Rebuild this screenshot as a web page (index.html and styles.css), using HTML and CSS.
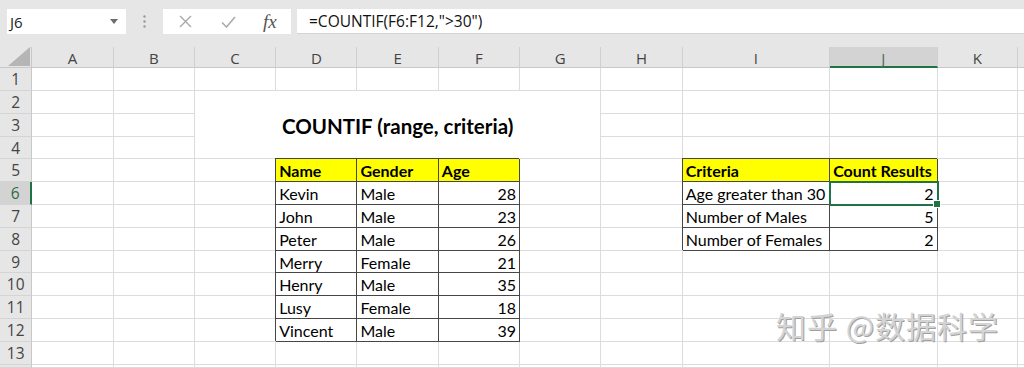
FILE: index.html
```html
<!DOCTYPE html>
<html lang="en">
<head>
    <meta charset="utf-8">
    <title>COUNTIF</title>
    <link rel="stylesheet" href="styles.css">
</head>
<body>
    <div class="toolbar">
        <div class="namebox">
            <span>J6</span>
            <svg class="arrow" width="8" height="5" viewBox="0 0 8 5"><path d="M0 0h8L4 5z" fill="#6d6d6d"/></svg>
        </div>
        <div class="dots">
            <svg width="3" height="13" viewBox="0 0 3 13"><circle cx="1.5" cy="1.5" r="1.2" fill="#9a9a9a"/><circle cx="1.5" cy="6.5" r="1.2" fill="#9a9a9a"/><circle cx="1.5" cy="11.5" r="1.2" fill="#9a9a9a"/></svg>
        </div>
        <div class="fxbox">
            <svg width="13" height="13" viewBox="0 0 13 13"><path d="M1 1l11 11M12 1L1 12" stroke="#a8a8a8" stroke-width="1.4" fill="none"/></svg>
            <svg width="15" height="12" viewBox="0 0 15 12"><path d="M1 6.5l4.5 4.5L14 1" stroke="#a8a8a8" stroke-width="1.5" fill="none"/></svg>
            <span class="fx">fx</span>
        </div>
        <div class="formula">=COUNTIF(F6:F12,"&gt;30")</div>
    </div>

    <div class="sheet">
        <div class="corner"><svg width="22" height="19" viewBox="0 0 22 19"><path d="M22 0v19H0z" fill="#b5b5b5"/></svg></div>
        <div class="ch">A</div><div class="ch">B</div><div class="ch">C</div><div class="ch">D</div><div class="ch">E</div><div class="ch">F</div><div class="ch">G</div><div class="ch">H</div><div class="ch">I</div><div class="ch active">J</div><div class="ch">K</div><div class="ch"></div>

        <div class="rh">1</div><div></div><div></div><div></div><div></div><div></div><div></div><div></div><div></div><div></div><div></div><div></div><div></div>

        <div class="rh">2</div><div></div><div></div>
        <div class="title">COUNTIF (range, criteria)</div>
        <div></div><div></div><div></div><div></div><div></div>

        <div class="rh">3</div><div></div><div></div><div></div><div></div><div></div><div></div><div></div>
        <div class="rh">4</div><div></div><div></div><div></div><div></div><div></div><div></div><div></div>

        <div class="rh">5</div><div></div><div></div><div></div>
        <div class="b head">Name</div><div class="b head">Gender</div><div class="b head">Age</div>
        <div></div><div></div>
        <div class="b head">Criteria</div><div class="b head">Count Results</div>
        <div></div><div></div>

        <div class="rh active">6</div><div></div><div></div><div></div>
        <div class="b">Kevin</div><div class="b">Male</div><div class="b num">28</div>
        <div></div><div></div>
        <div class="b">Age greater than 30</div><div class="b num sel">2</div>
        <div></div><div></div>

        <div class="rh">7</div><div></div><div></div><div></div>
        <div class="b">John</div><div class="b">Male</div><div class="b num">23</div>
        <div></div><div></div>
        <div class="b">Number of Males</div><div class="b num">5</div>
        <div></div><div></div>

        <div class="rh">8</div><div></div><div></div><div></div>
        <div class="b">Peter</div><div class="b">Male</div><div class="b num">26</div>
        <div></div><div></div>
        <div class="b">Number of Females</div><div class="b num">2</div>
        <div></div><div></div>

        <div class="rh">9</div><div></div><div></div><div></div>
        <div class="b">Merry</div><div class="b">Female</div><div class="b num">21</div>
        <div></div><div></div><div></div><div></div><div></div><div></div>

        <div class="rh">10</div><div></div><div></div><div></div>
        <div class="b">Henry</div><div class="b">Male</div><div class="b num">35</div>
        <div></div><div></div><div></div><div></div><div></div><div></div>

        <div class="rh">11</div><div></div><div></div><div></div>
        <div class="b">Lusy</div><div class="b">Female</div><div class="b num">18</div>
        <div></div><div></div><div></div><div></div><div></div><div></div>

        <div class="rh">12</div><div></div><div></div><div></div>
        <div class="b">Vincent</div><div class="b">Male</div><div class="b num">39</div>
        <div></div><div></div><div></div><div></div><div></div><div></div>

        <div class="rh">13</div><div></div><div></div><div></div><div></div><div></div><div></div><div></div><div></div><div></div><div></div><div></div><div></div>
        <div class="rh"></div><div></div><div></div><div></div><div></div><div></div><div></div><div></div><div></div><div></div><div></div><div></div><div></div>
    </div>

    <div class="watermark">知乎 @数据科学</div>
</body>
</html>
```

FILE: styles.css
```css
* {
    box-sizing: border-box;
    margin: 0;
    padding: 0;
}
body {
    width: 1024px;
    height: 368px;
    overflow: hidden;
    background-color: #ffffff;
    font-family: "Open Sans", "Noto Sans", sans-serif;
    position: relative;
}

/* formula bar */
.toolbar {
    height: 47px;
    background-color: #e6e6e6;
    display: flex;
    align-items: flex-start;
    padding-top: 9px;
}
.namebox {
    width: 119px;
    height: 25px;
    margin-left: 7px;
    background-color: #fff;
    display: flex;
    align-items: center;
    justify-content: space-between;
    padding: 0 8px 0 3px;
    font-size: 15px;
    color: #222;
}
.dots {
    width: 37px;
    height: 25px;
    display: flex;
    align-items: center;
    justify-content: center;
}
.fxbox {
    width: 128px;
    height: 25px;
    background-color: #fff;
    display: flex;
    align-items: center;
    padding-left: 16px;
    gap: 29px;
}
.fx {
    font-family: "Liberation Serif", serif;
    font-style: italic;
    font-size: 19px;
    color: #555;
    margin-left: -2px;
    line-height: 25px;
}
.formula {
    flex: 1;
    height: 25px;
    margin-left: 6px;
    background-color: #fff;
    border-bottom: 1px solid #d4d4d4;
    padding-left: 12px;
    font-size: 15.5px;
    line-height: 24px;
    color: #111;
}

/* worksheet */
.sheet {
    display: grid;
    height: 321px;
    overflow: hidden;
    grid-template-columns: 32.3px repeat(8, 81.3px) 147.5px 107.4px 80.6px 1fr;
    grid-template-rows: 21.2px repeat(13, 22.8px) 1fr;
    font-family: Lato, "Open Sans", sans-serif;
    font-size: 16px;
    color: #000;
}
.sheet > div {
    border-right: 1px solid #dcdcdc;
    border-bottom: 1px solid #dcdcdc;
    padding: 1px 3px 0;
    line-height: 21px;
    white-space: nowrap;
}
.sheet > .corner {
    background-color: #e6e6e6;
    border-right-color: #c8c8c8;
    border-bottom-color: #c8c8c8;
    display: flex;
    align-items: flex-end;
    justify-content: flex-end;
    padding: 0 1px 1px 0;
}
.sheet > .ch {
    background-color: #e6e6e6;
    border-right-color: #cfcfcf;
    border-bottom-color: #c8c8c8;
    font-family: "Open Sans", sans-serif;
    font-size: 15px;
    color: #444;
    text-align: center;
    line-height: 20px;
}
.sheet > .rh {
    background-color: #e6e6e6;
    border-right-color: #c8c8c8;
    border-bottom-color: #d4d4d4;
    font-family: "Open Sans", sans-serif;
    font-size: 15.5px;
    color: #444;
    text-align: center;
    padding: 0;
    line-height: 22px;
}
.sheet > .ch.active {
    background-color: #d3d3d3;
    color: #4f6b58;
    border-bottom: 2px solid #217346;
}
.sheet > .rh.active {
    background-color: #d3d3d3;
    color: #2e6b47;
    border-right: 2px solid #217346;
}
.sheet > .title {
    grid-column: span 5;
    grid-row: span 3;
    display: flex;
    align-items: center;
    justify-content: center;
    font-size: 20.5px;
    font-weight: bold;
    padding-top: 3px;
}
.sheet > .b {
    border-right-color: #464646;
    border-bottom-color: #464646;
    box-shadow: -1px -1px 0 #464646;
}
.sheet > .head {
    background-color: #ffff00;
    font-weight: bold;
}
.sheet > .num {
    text-align: right;
}
.sheet > .sel {
    position: relative;
    z-index: 2;
    outline: 2px solid #217346;
    outline-offset: -1px;
}
.sel::after {
    content: "";
    position: absolute;
    right: -4px;
    bottom: -4px;
    width: 6px;
    height: 6px;
    background-color: #217346;
    border: 1px solid #fff;
}

.watermark {
    position: absolute;
    left: 776px;
    top: 303px;
    font-family: "Noto Sans CJK SC", sans-serif;
    font-size: 30px;
    color: #d4d4d4;
    text-shadow: 1px 1px 0 #a0a0a0;
    letter-spacing: 1px;
    white-space: nowrap;
}
```
